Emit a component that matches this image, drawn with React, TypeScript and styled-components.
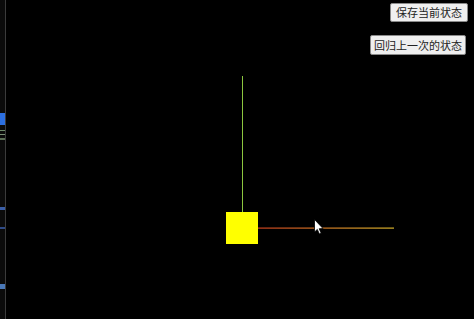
import React from "react";
import styled, { createGlobalStyle } from "styled-components";

const GlobalStyle = createGlobalStyle`
  html, body {
    margin: 0;
    padding: 0;
    background: #000;
    overflow: hidden;
  }
`;

const Screen = styled.div`
  display: flex;
  width: 474px;
  height: 319px;
  background: #000;
`;

const SideStrip = styled.div`
  width: 5px;
  flex: none;
  background: #0b0b0b;
  border-right: 1px solid #3b3b3b;
  svg {
    display: block;
  }
`;

const Stage = styled.div`
  position: relative;
  flex: 1;
  svg {
    display: block;
  }
`;

const Controls = styled.div`
  position: absolute;
  top: 3px;
  right: 6px;
  display: flex;
  flex-direction: column;
  align-items: flex-end;
  gap: 13px;
`;

const StateButton = styled.button<{ $inset?: number; $tight?: boolean }>`
  box-sizing: border-box;
  height: ${(p) => (p.$tight ? 20 : 19)}px;
  margin-right: ${(p) => p.$inset ?? 0}px;
  padding: 0 ${(p) => (p.$tight ? 3 : 5)}px;
  font-family: "Noto Sans CJK SC", "Noto Sans", sans-serif;
  font-size: 11px;
  line-height: 17px;
  white-space: nowrap;
  color: #222;
  background: #efefef;
  border: 1px solid #8a8a8a;
  border-radius: 2px;
  cursor: pointer;
`;

const sideMarks = [
  { y: 113, h: 12, c: "#2c6fe0" },
  { y: 130, h: 1, c: "#6f8a6a" },
  { y: 134, h: 1, c: "#7a8f74" },
  { y: 138, h: 2, c: "#5d7057" },
  { y: 207, h: 3, c: "#3b5fa8" },
  { y: 227, h: 2, c: "#2f4b88" },
  { y: 284, h: 5, c: "#4a78b8" },
];

export default function App() {
  return (
    <>
      <GlobalStyle />
      <Screen>
        <SideStrip>
          <svg width="5" height="319">
            {sideMarks.map((m, i) => (
              <rect key={i} x="0" y={m.y} width="5" height={m.h} fill={m.c} />
            ))}
          </svg>
        </SideStrip>
        <Stage>
          <svg width="468" height="319" viewBox="0 0 468 319">
            <defs>
              <linearGradient id="xAxis" x1="0" x2="1" y1="0" y2="0">
                <stop offset="0" stopColor="#c8401e" />
                <stop offset="1" stopColor="#d6b12a" />
              </linearGradient>
            </defs>
            <line x1="236.5" y1="76" x2="236.5" y2="212" stroke="#8cc63f" strokeWidth="1" />
            <rect x="252" y="227.5" width="136" height="1.2" fill="url(#xAxis)" />
            <rect x="220" y="212" width="32" height="32" fill="#ffff00" />
            <path
              d="M308.5 219.5 L308.5 232 L311.3 229.4 L313.4 234 L315.2 233.2 L313.2 228.7 L317 228.5 Z"
              fill="#fff"
              stroke="#000"
              strokeWidth="0.8"
              strokeLinejoin="round"
            />
          </svg>
          <Controls>
            <StateButton>保存当前状态</StateButton>
            <StateButton $tight $inset={2}>
              回归上一次的状态
            </StateButton>
          </Controls>
        </Stage>
      </Screen>
    </>
  );
}
